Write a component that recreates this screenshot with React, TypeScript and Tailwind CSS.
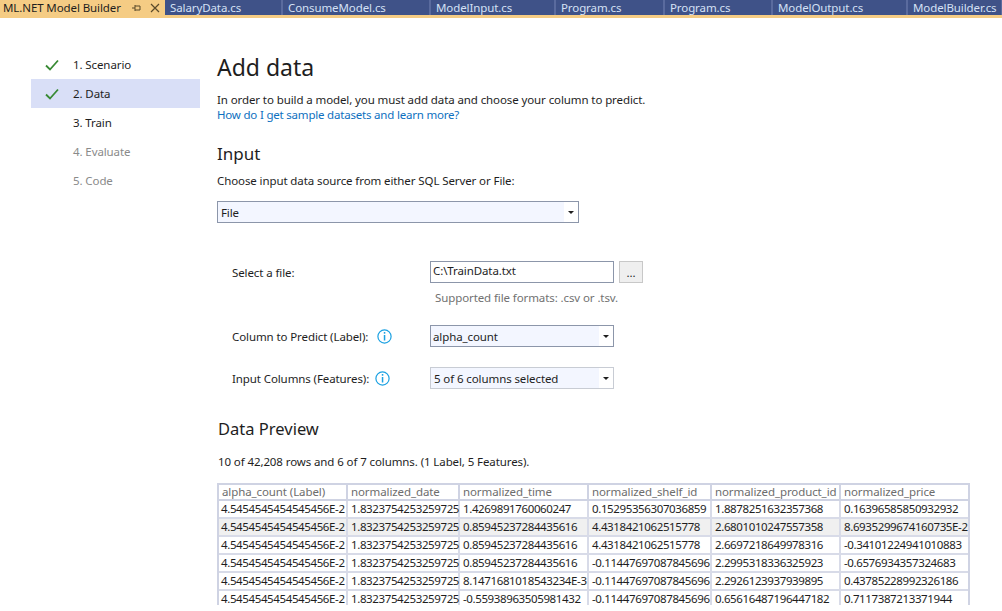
import React from "react";

const font = { fontFamily: '"Noto Sans", "Open Sans", sans-serif' };
const tabs: [string, string][] = [
  ["SalaryData.cs", "w-[118px]"],
  ["ConsumeModel.cs", "w-[148px]"],
  ["ModelInput.cs", "w-[125px]"],
  ["Program.cs", "w-[109px]"],
  ["Program.cs", "w-[108px]"],
  ["ModelOutput.cs", "w-[135px]"],
  ["ModelBuilder.cs", "w-[95px]"],
];
const cols = ["w-[131px]", "w-[112px]", "w-[129px]", "w-[123px]", "w-[129px]", "w-[130px]"];
const headers = ["alpha_count (Label)", "normalized_date", "normalized_time", "normalized_shelf_id", "normalized_product_id", "normalized_price"];
const A = "4.5454545454545456E-2";
const B = "1.8323754253259725";
const rows = [
  [A, B, "1.4269891760060247", "0.15295356307036859", "1.8878251632357368", "0.16396585850932932"],
  [A, B, "0.85945237284435616", "4.4318421062515778", "2.6801010247557358", "8.6935299674160735E-2"],
  [A, B, "0.85945237284435616", "4.4318421062515778", "2.6697218649978316", "-0.34101224941010883"],
  [A, B, "0.85945237284435616", "-0.11447697087845696", "2.2995318336325923", "-0.6576934357324683"],
  [A, B, "8.1471681018543234E-3", "-0.11447697087845696", "2.2926123937939895", "0.43785228992326186"],
  [A, B, "-0.55938963505981432", "-0.11447697087845696", "0.65616487196447182", "0.7117387213371944"],
];

function Check() {
  return (
    <svg width="14" height="12" viewBox="0 0 14 12" className="ml-[14px] mr-[14px]">
      <path d="M1 6.5 L5 10.5 L13 1.5" fill="none" stroke="#388a34" strokeWidth="1.8" />
    </svg>
  );
}

function Info() {
  return (
    <svg width="15" height="15" viewBox="0 0 15 15">
      <circle cx="7.5" cy="7.5" r="6.6" fill="none" stroke="#1ba1e2" strokeWidth="1.2" />
      <rect x="6.8" y="3" width="1.5" height="1.7" fill="#1ba1e2" />
      <rect x="6.8" y="6" width="1.5" height="5.5" fill="#1ba1e2" />
    </svg>
  );
}

function Arrow() {
  return <span className="w-0 h-0 border-x-[3px] border-x-transparent border-t-[3px] border-t-[#1e1e1e]" />;
}

function Step({ label, done, active, dim }: { label: string; done?: boolean; active?: boolean; dim?: boolean }) {
  return (
    <div className={`h-[29px] flex items-center ${active ? "bg-[#d9dff7]" : ""}`}>
      {done ? <Check /> : <span className="w-[42px]" />}
      <span className={`pb-[1px] ${dim ? "text-[#8a8a8a]" : "text-[#1e1e1e]"}`}>{label}</span>
    </div>
  );
}

function Select({ text, width, indent, shade }: { text: string; width: string; indent: string; shade: string }) {
  return (
    <div className={`${width} ${shade} h-[22px] flex items-stretch border border-[#8c96aa] bg-[#f3f6ff]`}>
      <span className={`flex-1 flex items-center ${indent}`}>{text}</span>
      <span className="w-[14px] bg-white flex items-center justify-center">
        <Arrow />
      </span>
    </div>
  );
}

export default function App() {
  return (
    <div style={font} className="w-[1002px] h-[611px] overflow-hidden bg-white text-[11.5px] tracking-[-0.1px] leading-[15px] text-[#1e1e1e]">
      <div className="h-[18px] border-b-[3px] border-[#f5cc84] bg-[#3f5288] flex overflow-hidden">
        <div className="w-[165px] bg-[#f5cc84] flex items-center pl-[3px] shrink-0">
          <span className="w-[128px] whitespace-nowrap">ML.NET Model Builder</span>
          <svg width="10" height="10" viewBox="0 0 10 10" className="ml-[1px]">
            <path d="M0 5H3M3 2V8M3 3H8V7H3M8 5" fill="none" stroke="#5a4a2a" />
          </svg>
          <svg width="10" height="10" viewBox="0 0 10 10" className="ml-[8px]">
            <path d="M1 1L9 9M9 1L1 9" fill="none" stroke="#5a4a2a" strokeWidth="1.2" />
          </svg>
        </div>
        {tabs.map(([t, w], i) => (
          <div key={i} className={`${w} shrink-0 pl-[5px] border-r-2 border-[#5a6b9e] text-[#d5e1f5] flex items-center whitespace-nowrap`}>
            {t}
          </div>
        ))}
      </div>

      <div className="flex">
        <div className="w-[169px] ml-[31px] mt-[32px] shrink-0">
          <Step label="1. Scenario" done />
          <Step label="2. Data" done active />
          <Step label="3. Train" />
          <Step label="4. Evaluate" dim />
          <Step label="5. Code" dim />
        </div>

        <div className="ml-[17px] flex-1 min-w-0">
          <h1 className="mt-[33px] text-[23px] tracking-normal leading-[33px]">Add data</h1>
          <p className="mt-[8px]">In order to build a model, you must add data and choose your column to predict.</p>
          <p className="text-[#0e70c0] tracking-[-0.2px]">How do I get sample datasets and learn more?</p>
          <h2 className="mt-[20px] text-[17px] tracking-normal leading-[24px]">Input</h2>
          <p className="mt-[7px]">Choose input data source from either SQL Server or File:</p>
          <div className="mt-[13px]">
            <Select text="File" width="w-[362px]" indent="pl-[3px]" shade="" />
          </div>

          <div className="mt-[38px] flex items-center h-[22px]">
            <span className="ml-[15px] w-[198px]">Select a file:</span>
            <div className="w-[184px] h-[22px] border border-[#8c96aa] bg-white pl-[2px] pb-[3px] flex items-center">C:\TrainData.txt</div>
            <div className="ml-[5px] w-[24px] h-[22px] border border-[#c8c8c8] bg-[#efefef] flex items-center justify-center">...</div>
          </div>
          <p className="mt-[7px] ml-[218px] text-[#717171]">Supported file formats: .csv or .tsv.</p>

          <div className="mt-[20px] flex items-center h-[22px]">
            <span className="ml-[15px] w-[198px] flex items-center gap-[9px]">
              Column to Predict (Label): <Info />
            </span>
            <Select text="alpha_count" width="w-[184px]" indent="pl-[2px]" shade="" />
          </div>
          <div className="mt-[20px] flex items-center h-[22px]">
            <span className="ml-[15px] w-[198px] flex items-center gap-[6px]">
              Input Columns (Features): <Info />
            </span>
            <Select text="5 of 6 columns selected" width="w-[184px]" indent="pl-[3px]" shade="border-[#c8ccd4]" />
          </div>

          <h2 className="mt-[28px] ml-px text-[16.5px] tracking-normal leading-[24px]">Data Preview</h2>
          <p className="mt-[13px] ml-px">10 of 42,208 rows and 6 of 7 columns. (1 Label, 5 Features).</p>

          <div className="mt-[14px] h-[122px] w-[753px] overflow-hidden border-t-2 border-x-2 border-[#cfd3e3]">
            <div className="flex h-[14px] leading-[13px] border-b-2 border-[#cfd3e3] text-[#6d6d6d] box-content">
              {headers.map((h, i) => (
                <div key={i} className={`${cols[i]} ${i === 0 ? "ml-[-2px] pl-[5px]" : "pl-[3px]"} shrink-0 border-r-2 border-[#cfd3e3] whitespace-nowrap`}>
                  {h}
                </div>
              ))}
            </div>
            {rows.map((r, j) => (
              <div key={j} className={`flex h-[18px] border-b-2 border-[#d8dbe8] tracking-[-0.38px] ${j === 1 ? "bg-[#f0f0f0]" : ""}`}>
                {r.map((c, i) => (
                  <div key={i} className={`${cols[i]} ${i === 0 ? "ml-[-2px] pl-[4px]" : "pl-[3px]"} shrink-0 border-r-2 border-[#d8dbe8] whitespace-nowrap`}>
                    {c}
                  </div>
                ))}
              </div>
            ))}
          </div>
        </div>
      </div>
    </div>
  );
}
